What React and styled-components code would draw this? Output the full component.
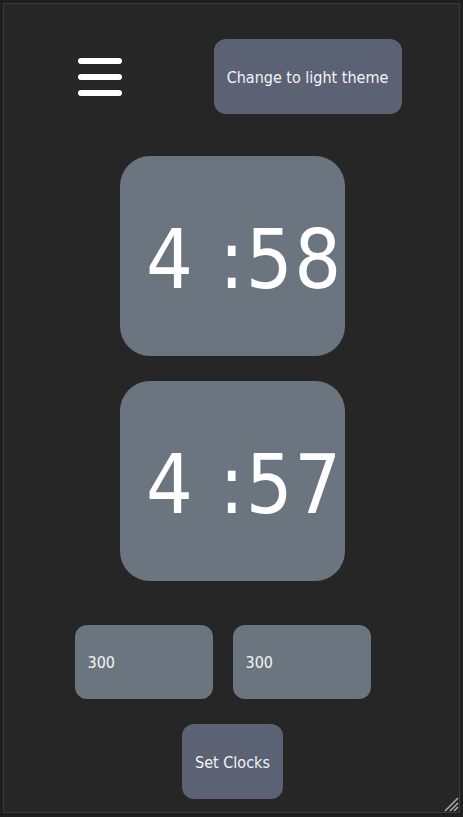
import React, { useState } from 'react'
import styled, { createGlobalStyle } from 'styled-components'

const GlobalStyle = createGlobalStyle`
  * { box-sizing: border-box; }
  html, body {
    margin: 0;
    background: #1f1f1f;
  }
  body {
    font-family: "DejaVu Sans Condensed", "DejaVu Sans", sans-serif;
    font-stretch: condensed;
  }
`

const Frame = styled.div`
  position: relative;
  margin: 3px 3px 0 3px;
  width: 457px;
  height: 810px;
  border: 1px solid #3b3b3b;
  background: #262626;
  display: flex;
  flex-direction: column;
  align-items: center;
  padding: 35px 0 0 2px;
`

const Header = styled.div`
  display: flex;
  align-items: center;
  gap: 92px;
  margin-left: 14px;
`

const Burger = styled.button`
  width: 44px;
  display: flex;
  flex-direction: column;
  gap: 10px;
  padding: 0;
  border: none;
  background: none;
`

const Bar = styled.span`
  display: block;
  height: 6px;
  border-radius: 3px;
  background: #ffffff;
`

const Button = styled.button`
  height: 75px;
  width: ${(p) => p.$w}px;
  border: none;
  border-radius: 12px;
  background: #5a6274;
  color: #f4f4f4;
  font-family: inherit;
  font-stretch: condensed;
  font-size: 16px;
  padding: 2px 0 0;
`

const Clock = styled.div`
  width: 225px;
  height: 200px;
  border-radius: 30px;
  background: #6b7580;
  color: #ffffff;
  font-size: 82px;
  letter-spacing: 1.5px;
  display: flex;
  align-items: center;
  padding: 6px 0 0 26px;
  white-space: nowrap;
  margin-top: ${(p) => p.$top}px;
`

const InputRow = styled.div`
  display: flex;
  gap: 20px;
  margin-top: 44px;
  margin-right: 20px;
`

const Field = styled.input`
  width: 138px;
  height: 74px;
  border: none;
  border-radius: 12px;
  background: #6b7580;
  color: #f4f4f4;
  font-family: inherit;
  font-stretch: condensed;
  font-size: 16px;
  padding: 0 0 0 13px;
  outline: none;
`

const Footer = styled.div`
  margin-top: 25px;
`

const Grip = styled.svg`
  position: absolute;
  right: 0;
  bottom: 0;
`

export default function App() {
  const [a, setA] = useState('300')
  const [b, setB] = useState('300')
  return (
    <>
      <GlobalStyle />
      <Frame>
        <Header>
          <Burger aria-label="menu">
            <Bar />
            <Bar />
            <Bar />
          </Burger>
          <Button $w={188}>Change to light theme</Button>
        </Header>
        <Clock $top={42}>4 :58</Clock>
        <Clock $top={25}>4 :57</Clock>
        <InputRow>
          <Field value={a} onChange={(e) => setA(e.target.value)} />
          <Field value={b} onChange={(e) => setB(e.target.value)} />
        </InputRow>
        <Footer>
          <Button $w={101}>Set Clocks</Button>
        </Footer>
        <Grip width="16" height="16" viewBox="0 0 16 16">
          <g stroke="#a8a8a8" strokeWidth="1.6">
            <line x1="15" y1="2" x2="2" y2="15" />
            <line x1="15" y1="7" x2="7" y2="15" />
            <line x1="15" y1="11" x2="11" y2="15" />
          </g>
        </Grip>
      </Frame>
    </>
  )
}
